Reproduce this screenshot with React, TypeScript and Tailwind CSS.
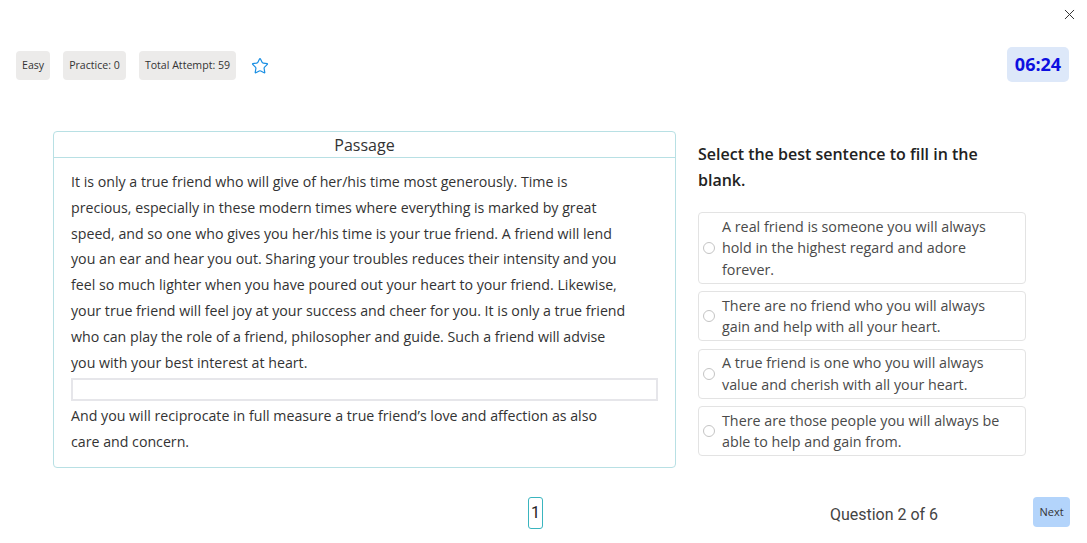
import { X, Star } from "lucide-react";

const passageLines = [
  "It is only a true friend who will give of her/his time most generously. Time is",
  "precious, especially in these modern times where everything is marked by great",
  "speed, and so one who gives you her/his time is your true friend. A friend will lend",
  "you an ear and hear you out. Sharing your troubles reduces their intensity and you",
  "feel so much lighter when you have poured out your heart to your friend. Likewise,",
  "your true friend will feel joy at your success and cheer for you. It is only a true friend",
  "who can play the role of a friend, philosopher and guide. Such a friend will advise",
  "you with your best interest at heart.",
];

const afterLines = [
  "And you will reciprocate in full measure a true friend\u2019s love and affection as also",
  "care and concern.",
];

const options = [
  ["A real friend is someone you will always", "hold in the highest regard and adore", "forever."],
  ["There are no friend who you will always", "gain and help with all your heart."],
  ["A true friend is one who you will always", "value and cherish with all your heart."],
  ["There are those people you will always be", "able to help and gain from."],
];

const poppins = "font-['Open_Sans',sans-serif]";

function Badge({ label }: { label: string }) {
  return (
    <span className="flex h-[29px] items-center rounded-[4px] bg-[#ecebea] px-[6px] font-['Open_Sans',sans-serif] text-[10.6px] text-[#333]">
      {label}
    </span>
  );
}

export default function App() {
  return (
    <div className="relative h-[543px] w-[1087px] overflow-hidden bg-white">
      <button className="absolute right-[9px] top-[6px] text-[#333]">
        <X size={17} strokeWidth={1.4} />
      </button>

      <div className="flex items-center justify-between pl-4 pr-[18px] pt-[47px]">
        <div className="flex items-center gap-[13px] pt-[2px]">
          <Badge label="Easy" />
          <Badge label="Practice: 0" />
          <Badge label="Total Attempt: 59" />
          <Star size={18} strokeWidth={1.6} className="ml-[2px] text-[#1a8fe3]" />
        </div>
        <div className="flex h-[35px] w-[62px] items-center justify-center rounded-[5px] bg-[#dde8f9] font-['Open_Sans',sans-serif] text-[18px] font-bold text-[#0d0fe0]">
          06:24
        </div>
      </div>

      <div className="mt-[49px] flex items-start pl-[53px]">
        <div className="w-[623px] rounded-[4px] border border-[#b8e0e4]">
          <div className={`flex h-[26px] items-center justify-center border-b border-[#b8e0e4] ${poppins} text-[16px] text-[#333]`}>
            Passage
          </div>
          <div className={`px-[17px] pb-[12px] pt-[11px] ${poppins} text-[14.2px] leading-[25.8px] text-[#333]`}>
            {passageLines.map((l) => (
              <div key={l} className="whitespace-nowrap">{l}</div>
            ))}
            <div className="mb-[2px] mt-[3px] h-[23px] w-[587px] border-2 border-[#e6e6ea]" />
            {afterLines.map((l) => (
              <div key={l} className="whitespace-nowrap">{l}</div>
            ))}
          </div>
        </div>

        <div className="ml-[22px] w-[328px] pt-[10px]">
          <div className={`${poppins} text-[16px] font-semibold leading-[26px] text-[#222]`}>
            Select the best sentence to fill in the
            <br />
            blank.
          </div>
          <div className="mt-[19px] flex flex-col gap-[7.5px]">
            {options.map((o) => (
              <label
                key={o[0]}
                className="flex items-center rounded-[4px] border border-[#e3e3e3] py-[2.5px] pl-[4px]"
              >
                <span className="h-[12px] w-[12px] shrink-0 rounded-full border border-[#c4c4c4]" />
                <span className={`ml-[7px] ${poppins} text-[14.3px] leading-[21.5px] text-[#4a4a4a]`}>
                  {o.map((l) => (
                    <div key={l} className="whitespace-nowrap">{l}</div>
                  ))}
                </span>
              </label>
            ))}
          </div>
        </div>
      </div>

      <div className="absolute bottom-[14px] left-0 right-0 flex items-center">
        <div className="ml-[528px] flex h-[32px] w-[15px] items-center justify-center rounded-[3px] border border-[#3ab5bf] font-['Roboto',sans-serif] text-[16px] text-[#222]">
          1
        </div>
        <div className="ml-[280px] mt-[3px] w-[122px] text-center font-['Roboto',sans-serif] text-[16px] text-[#444]">
          Question 2 of 6
        </div>
        <button className="ml-auto mr-[17px] -mt-[2px] flex h-[30px] w-[37px] items-center justify-center rounded-[4px] bg-[#b3d4fb] font-['Open_Sans',sans-serif] text-[11px] text-[#333]">
          Next
        </button>
      </div>
    </div>
  );
}
